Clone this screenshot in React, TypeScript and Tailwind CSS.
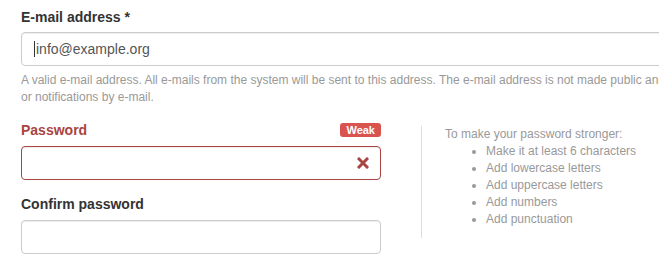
import React from "react";

const hints = [
  "Make it at least 6 characters",
  "Add lowercase letters",
  "Add uppercase letters",
  "Add numbers",
  "Add punctuation",
];

function RemoveIcon() {
  return (
    <svg viewBox="0 0 12 12" className="h-[12px] w-[12px]" aria-hidden="true">
      <path d="M2 2 L10 10 M10 2 L2 10" stroke="#a94442" strokeWidth="3" strokeLinecap="square" />
    </svg>
  );
}

export default function App() {
  return (
    <div
      className="h-[274px] w-[659px] overflow-hidden bg-white text-[14px] text-[#333]"
      style={{ fontFamily: '"Liberation Sans", Arial, sans-serif' }}
    >
      <div className="w-[900px] pl-[21px] pt-[7px]">
        <div className="mb-[14px]">
          <label className="mb-[5px] block font-bold leading-[20px]">E-mail address *</label>
          <div className="flex h-[34px] items-center rounded-[4px] border border-[#ccc] px-[12px] text-[#555] shadow-[inset_0_1px_1px_rgba(0,0,0,0.075)]">
            <span className="mr-px h-[16px] w-px bg-[#333]" />
            info@example.org
          </div>
          <p className="mt-[6px] whitespace-nowrap text-[12px] leading-[17px] text-[#999]">
            A valid e-mail address. All e-mails from the system will be sent to this address. The e-mail address is not
            made public and will only be used if you wish to receive a new password or wish to receive certain news
            <br />
            or notifications by e-mail.
          </p>
        </div>

        <div className="flex">
          <div className="w-[360px]">
            <div className="mb-[14px]">
              <div className="mb-[6px] flex items-center justify-between leading-[20px]">
                <label className="font-bold text-[#a94442]">Password</label>
                <span className="rounded-[3px] bg-[#d9534f] px-[6px] text-[11px] font-bold leading-[14px] text-white">
                  Weak
                </span>
              </div>
              <div className="flex h-[34px] items-center justify-end rounded-[4px] border border-[#a94442] pr-[11px] shadow-[inset_0_1px_1px_rgba(0,0,0,0.075)]">
                <RemoveIcon />
              </div>
            </div>
            <div>
              <label className="mb-[6px] block font-bold leading-[20px]">Confirm password</label>
              <div className="h-[34px] rounded-[4px] border border-[#ccc] shadow-[inset_0_1px_1px_rgba(0,0,0,0.075)]" />
            </div>
          </div>

          <div className="ml-[40px] mt-[6px] self-start border-l border-[#ddd] pb-[10px] pl-[23px] text-[12px] leading-[17px] text-[#999]">
            <p>To make your password stronger:</p>
            <ul className="list-disc pl-[41px] marker:text-[#999]">
              {hints.map((h) => (
                <li key={h}>{h}</li>
              ))}
            </ul>
          </div>
        </div>
      </div>
    </div>
  );
}
